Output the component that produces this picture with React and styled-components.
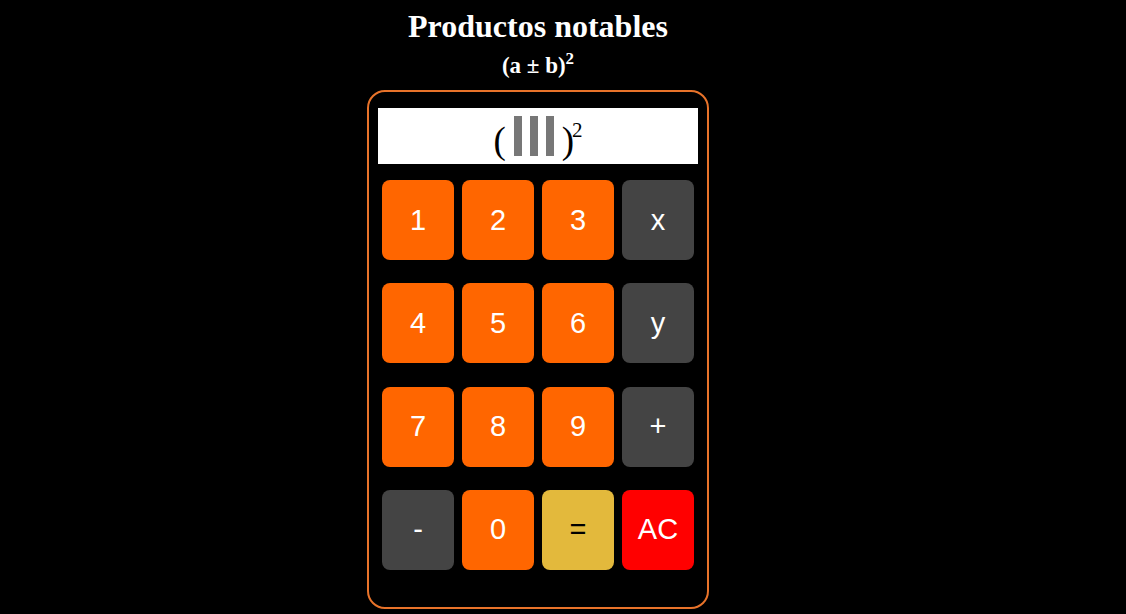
import React from "react";
import styled, { createGlobalStyle } from "styled-components";

const Global = createGlobalStyle`
  html, body { margin: 0; padding: 0; background: #000; }
  body { font-family: "Liberation Serif", "Times New Roman", serif; color: #fff; }
`;

const Page = styled.div`
  display: flex;
  flex-direction: column;
  align-items: center;
  padding: 8px 50px 0 0;
  min-height: 614px;
  box-sizing: border-box;
`;

const Title = styled.h1`
  margin: 0;
  font-size: 32px;
  font-weight: bold;
  line-height: 37px;
`;

const Subtitle = styled.h2`
  margin: 8px 0 0;
  font-size: 23px;
  font-weight: bold;
  line-height: 26px;
  sup {
    font-size: 17px;
    vertical-align: 9px;
    line-height: 0;
  }
`;

const Calculator = styled.div`
  margin-top: 11px;
  width: 342px;
  height: 519px;
  box-sizing: border-box;
  border: 2px solid #e8732a;
  border-radius: 18px;
  padding: 16px 9px 0;
  display: flex;
  flex-direction: column;
  align-items: center;
`;

const Display = styled.div`
  width: 320px;
  height: 56px;
  background: #fff;
  color: #000;
  display: flex;
  align-items: center;
  justify-content: center;
  gap: 8px;
  font-family: "Liberation Serif", "Times New Roman", serif;
  font-size: 37px;
  line-height: 1;
`;

const Paren = styled.span`
  display: inline-block;
  transform: translateY(4px);
`;

const Bar = styled.span`
  display: inline-block;
  width: 8px;
  height: 40px;
  background: #777;
`;

const Exp = styled.sup`
  font-size: 21px;
  position: relative;
  top: -6px;
  margin-left: -10px;
`;

const Keys = styled.div`
  margin-top: 16px;
  display: grid;
  grid-template-columns: repeat(4, 72px);
  grid-auto-rows: 80px;
  column-gap: 8px;
  row-gap: 23.33px;
`;

const colors = {
  num: "#ff6600",
  op: "#444444",
  eq: "#e3b93c",
  clear: "#ff0000",
};

const Key = styled.button`
  border: none;
  border-radius: 8px;
  background: ${(p) => colors[p.$kind]};
  color: ${(p) => (p.$kind === "eq" ? "#000" : "#fff")};
  font-family: "Liberation Sans", Arial, sans-serif;
  font-size: 29px;
  display: flex;
  align-items: center;
  justify-content: center;
  padding: 0;
  cursor: pointer;
`;

const keys = [
  ["1", "num"], ["2", "num"], ["3", "num"], ["x", "op"],
  ["4", "num"], ["5", "num"], ["6", "num"], ["y", "op"],
  ["7", "num"], ["8", "num"], ["9", "num"], ["+", "op"],
  ["-", "op"], ["0", "num"], ["=", "eq"], ["AC", "clear"],
];

export default function App() {
  return (
    <>
      <Global />
      <Page>
        <Title>Productos notables</Title>
        <Subtitle>
          (a ± b)<sup>2</sup>
        </Subtitle>
        <Calculator>
          <Display>
            <Paren>(</Paren>
            <Bar />
            <Bar />
            <Bar />
            <Paren>)</Paren>
            <Exp>2</Exp>
          </Display>
          <Keys>
            {keys.map(([label, kind]) => (
              <Key key={label} $kind={kind}>
                {label}
              </Key>
            ))}
          </Keys>
        </Calculator>
      </Page>
    </>
  );
}
